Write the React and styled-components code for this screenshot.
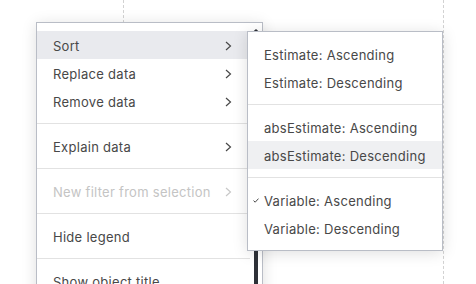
import React from 'react'
import styled, { createGlobalStyle } from 'styled-components'

const GlobalStyle = createGlobalStyle`
  html, body {
    margin: 0;
    padding: 0;
    background: #ffffff;
  }
  body {
    font-family: 'Inter', 'Lato', 'Liberation Sans', sans-serif;
  }
`

const Stage = styled.div`
  position: relative;
  width: 476px;
  height: 284px;
  overflow: hidden;
  background: #ffffff;
`

const GridLines = styled.div`
  margin-left: 123px;
  width: 319px;
  height: 100%;
  border-left: 1px dashed #d2d2d2;
  border-right: 1px dashed #d2d2d2;
`

const Menu = styled.div`
  position: absolute;
  left: ${p => p.$left}px;
  top: ${p => p.$top}px;
  width: ${p => p.$width}px;
  display: flex;
  background: #ffffff;
  border: 1px solid #b9bdc6;
  box-shadow: 0 2px 14px rgba(0, 0, 0, 0.13);
  z-index: ${p => p.$z || 1};
`

const List = styled.ul`
  flex: 1;
  list-style: none;
  margin: 0;
  padding: 8px 0;
`

const Item = styled.li`
  position: relative;
  display: flex;
  align-items: center;
  justify-content: space-between;
  box-sizing: border-box;
  height: 28px;
  padding: 1px ${p => p.$padRight || 16}px 0 16px;
  font-size: 13px;
  letter-spacing: 0.28px;
  color: ${p => (p.$disabled ? '#c4c4c4' : '#484848')};
  background: ${p => p.$active || 'transparent'};
  white-space: nowrap;
`

const Divider = styled.li`
  height: 1px;
  margin: 8px 0;
  background: #e2e2e2;
`

const Chevron = styled.svg`
  width: 7px;
  height: 10px;
  flex: none;
`

const Check = styled.svg`
  position: absolute;
  left: 5px;
  top: 12px;
  width: 6px;
  height: 5px;
`

const Track = styled.div`
  width: 12px;
  display: flex;
  flex-direction: column;
  align-items: center;
  padding-top: 6px;
`

const UpArrow = styled.div`
  width: 0;
  height: 0;
  border-left: 2px solid transparent;
  border-right: 2px solid transparent;
  border-bottom: 2px solid #2e3138;
  border-top: 0;
  transform: scaleX(1.1);
`

const Thumb = styled.div`
  width: 4px;
  flex: 1;
  margin-top: 180px;
  background: #2e3138;
`

const ChevronIcon = ({ color }) => (
  <Chevron viewBox="0 0 7 10">
    <polyline
      points="1,1 5.5,5 1,9"
      fill="none"
      stroke={color}
      strokeWidth="1.2"
    />
  </Chevron>
)

const mainItems = [
  { label: 'Sort', sub: true, active: '#e9eaee' },
  { label: 'Replace data', sub: true },
  { label: 'Remove data', sub: true },
  'divider',
  { label: 'Explain data', sub: true },
  'divider',
  { label: 'New filter from selection', sub: true, disabled: true },
  'divider',
  { label: 'Hide legend' },
  'divider',
  { label: 'Show object title' },
]

const sortItems = [
  { label: 'Estimate: Ascending' },
  { label: 'Estimate: Descending' },
  'divider',
  { label: 'absEstimate: Ascending' },
  { label: 'absEstimate: Descending', active: '#eff0f2' },
  'divider',
  { label: 'Variable: Ascending', checked: true },
  { label: 'Variable: Descending' },
]

export default function App() {
  return (
    <>
      <GlobalStyle />
      <Stage>
        <GridLines />
        <Menu $left={36} $top={22} $width={225} $z={1}>
          <List>
            {mainItems.map((item, index) =>
              item === 'divider' ? (
                <Divider key={index} />
              ) : (
                <Item
                  key={index}
                  $disabled={item.disabled}
                  $active={item.active}
                  $padRight={18}
                >
                  <span>{item.label}</span>
                  {item.sub && (
                    <ChevronIcon color={item.disabled ? '#c8c8c8' : '#484848'} />
                  )}
                </Item>
              )
            )}
          </List>
          <Track>
            <UpArrow />
            <Thumb />
          </Track>
        </Menu>
        <Menu $left={247} $top={31} $width={194} $z={2}>
          <List>
            {sortItems.map((item, index) =>
              item === 'divider' ? (
                <Divider key={index} />
              ) : (
                <Item key={index} $active={item.active}>
                  {item.checked && (
                    <Check viewBox="0 0 6 5">
                      <polyline
                        points="0.5,2.6 2.2,4.2 5.5,0.6"
                        fill="none"
                        stroke="#484848"
                        strokeWidth="1"
                      />
                    </Check>
                  )}
                  <span>{item.label}</span>
                </Item>
              )
            )}
          </List>
        </Menu>
      </Stage>
    </>
  )
}
